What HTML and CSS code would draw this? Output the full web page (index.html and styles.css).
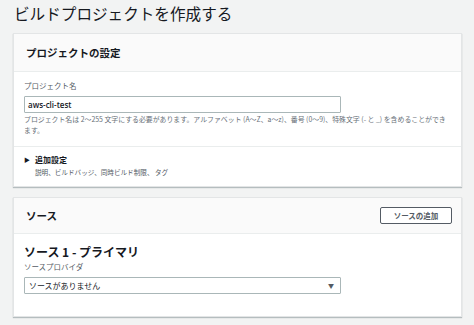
FILE: index.html
```html
<!DOCTYPE html>
<html lang="ja">
<head>
<meta charset="utf-8">
<link rel="stylesheet" href="styles.css">
</head>
<body>
<h1 class="page-title">ビルドプロジェクトを作成する</h1>

<section class="card">
  <div class="card-header">
    <h2 class="card-title">プロジェクトの設定</h2>
  </div>
  <div class="card-body">
    <label class="field-label">プロジェクト名</label>
    <div class="input">aws-cli-test</div>
    <p class="hint">プロジェクト名は 2～255 文字にする必要があります。アルファベット (A～Z、a～z)、番号 (0～9)、特殊文字 (- と _) を含めることができます。</p>
  </div>
  <div class="card-expander">
    <div class="expander-title"><span class="caret">▶</span>追加設定</div>
    <div class="expander-sub">説明、ビルドバッジ、同時ビルド制限、 タグ</div>
  </div>
</section>

<section class="card">
  <div class="card-header header-row">
    <h2 class="card-title">ソース</h2>
    <button class="btn">ソースの追加</button>
  </div>
  <div class="card-body source-body">
    <h3 class="sub-title">ソース 1 - プライマリ</h3>
    <label class="field-label">ソースプロバイダ</label>
    <div class="select"><span>ソースがありません</span><span class="arrow">▼</span></div>
  </div>
</section>
</body>
</html>
```

FILE: styles.css
```css
* { box-sizing: border-box; }
html, body { margin: 0; }
body {
  background: #f2f3f3;
  padding: 0 12px 0 13px;
  font-family: "Open Sans", "Noto Sans CJK JP", sans-serif;
  color: #16191f;
}
.page-title {
  margin: 0;
  padding: 3px 0 10px 1px;
  font-family: "Noto Sans CJK JP", sans-serif;
  font-size: 15.6px;
  line-height: 20px;
  font-weight: 400;
  color: #16191f;
}
.card {
  background: #fff;
  border: 1px solid #e3e5e6;
  box-shadow: 0 1px 1px rgba(0,28,36,0.25);
  margin-bottom: 10px;
}
.card-header {
  background: #fafafa;
  border-bottom: 1px solid #eaeded;
  height: 38px;
  padding: 0 12px;
  display: flex;
  align-items: center;
}
.header-row { justify-content: space-between; height: 36px; padding-right: 9px; }
.card-title {
  margin: 0;
  font-family: "Noto Sans CJK JP", sans-serif;
  font-size: 10.5px;
  font-weight: 700;
  line-height: 14px;
}
.card-body {
  padding: 8px 120px 0 10px;
}
.field-label {
  display: block;
  font-family: "Noto Sans CJK JP", sans-serif;
  font-size: 7.5px;
  line-height: 12px;
  color: #545b64;
  margin-bottom: 4px;
}
.input, .select {
  height: 17px;
  border: 1px solid #aab7b8;
  border-radius: 1px;
  font-size: 8px;
  line-height: 15px;
  padding: 0 3px;
  color: #16191f;
}
.input { font-family: "Open Sans", sans-serif; font-weight: 600; }
.hint {
  margin: 1px -110px 0 0;
  font-family: "Noto Sans CJK JP", sans-serif;
  font-size: 6.9px;
  line-height: 11px;
  color: #687078;
  padding-bottom: 10px;
}
.card-expander {
  border-top: 1px solid #eaeded;
  padding: 7px 10px 8px;
}
.expander-title {
  font-family: "Noto Sans CJK JP", sans-serif;
  font-size: 8px;
  font-weight: 700;
  line-height: 12px;
  display: flex;
  align-items: center;
}
.caret { font-size: 6px; margin-right: 5px; color: #16191f; }
.expander-sub {
  font-family: "Noto Sans CJK JP", sans-serif;
  font-size: 6.6px;
  line-height: 12px;
  color: #545b64;
  padding-left: 11px;
}
.btn {
  width: 72px;
  height: 17px;
  background: #fff;
  border: 1px solid #545b64;
  border-radius: 2px;
  font-family: "Noto Sans CJK JP", sans-serif;
  font-size: 7.5px;
  font-weight: 700;
  color: #545b64;
  padding: 0;
}
.source-body { padding-top: 10px; padding-bottom: 22px; }
.sub-title {
  margin: 0 0 1px;
  font-family: "Noto Sans CJK JP", sans-serif;
  font-size: 12px;
  font-weight: 700;
  line-height: 16px;
}
.select {
  display: flex;
  justify-content: space-between;
  align-items: center;
  font-family: "Noto Sans CJK JP", sans-serif;
  padding: 0 6px 0 4px;
}
.arrow { font-size: 6px; color: #545b64; }
```
